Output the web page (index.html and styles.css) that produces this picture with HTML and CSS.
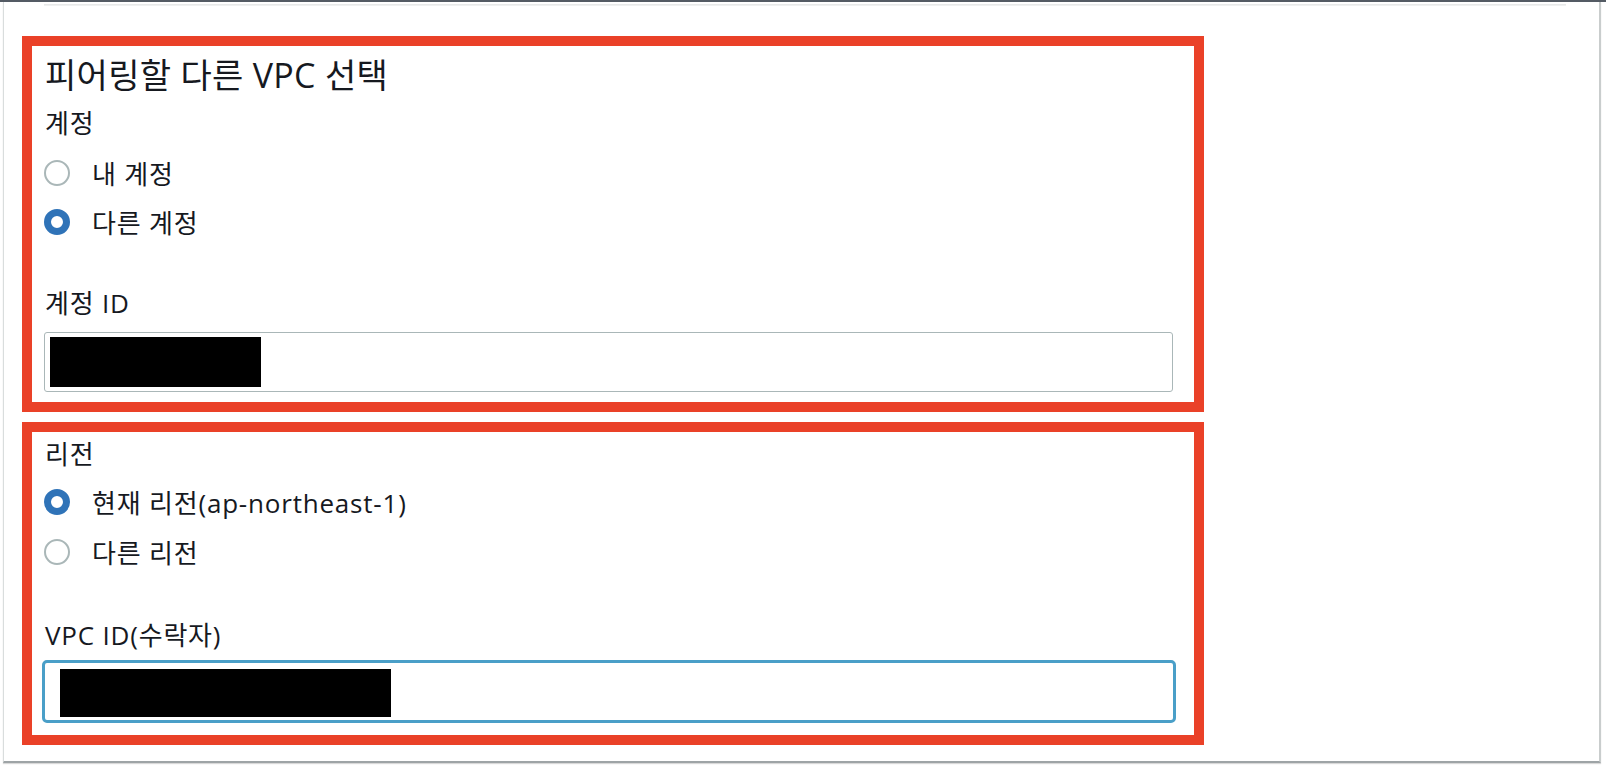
FILE: index.html
```html
<!DOCTYPE html>
<html lang="ko">
<head>
<meta charset="utf-8">
<title>VPC 피어링</title>
<link rel="stylesheet" href="styles.css">
</head>
<body>
<div class="topbar"></div>
<div class="card">
  <div class="divider"></div>
  <section class="box box-account">
    <h2 class="title">피어링할 다른 VPC 선택</h2>
    <div class="field-label">계정</div>
    <div class="radio-group">
      <label class="radio-row"><span class="radio"></span><span class="radio-text">내 계정</span></label>
      <label class="radio-row"><span class="radio checked"></span><span class="radio-text">다른 계정</span></label>
    </div>
    <div class="field-label field-gap">계정 ID</div>
    <div class="input input-account"><span class="redact redact-account"></span></div>
  </section>
  <section class="box box-region">
    <div class="field-label field-first">리전</div>
    <div class="radio-group">
      <label class="radio-row"><span class="radio checked"></span><span class="radio-text">현재 리전(ap-northeast-1)</span></label>
      <label class="radio-row"><span class="radio"></span><span class="radio-text">다른 리전</span></label>
    </div>
    <div class="field-label field-gap">VPC ID(수락자)</div>
    <div class="input input-focus"><span class="redact redact-vpc"></span></div>
  </section>
</div>
</body>
</html>
```
FILE: styles.css
```css
html, body {
  margin: 0;
  padding: 0;
  background: #ffffff;
}
body {
  font-family: "Open Sans", "Noto Sans CJK KR", sans-serif;
  color: #16191f;
  width: 1606px;
  height: 766px;
  overflow: hidden;
}
.topbar {
  height: 2px;
  background: #545b64;
}
.card {
  margin-left: 3px;
  width: 1598px;
  height: 761px;
  border-left: 1px solid #d9dddd;
  border-right: 2px solid #c9cdcd;
  border-bottom: 2px solid #9ea4a6;
  box-shadow: 0 1px 1px rgba(0,0,0,0.15);
  padding-top: 2px;
  padding-left: 18px;
  box-sizing: border-box;
}
.divider {
  margin-left: 22px;
  width: 1522px;
  height: 2px;
  background: linear-gradient(to bottom, #e3e5e5, #f4f5f5);
}
.box {
  width: 1182px;
  box-sizing: border-box;
  border: 10px solid #ea4128;
  padding: 0 21px 0 12px;
}
.box-account {
  margin-top: 30px;
  height: 376px;
}
.box-region {
  margin-top: 10px;
  height: 323px;
}
.title {
  margin: 0;
  height: 54px;
  display: flex;
  align-items: center;
  padding-left: 1px;
  font-size: 34px;
  font-weight: 400;
  letter-spacing: 0.3px;
}
.field-label {
  height: 44px;
  display: flex;
  align-items: center;
  padding-left: 1px;
  font-size: 26px;
  letter-spacing: 0.8px;
}
.field-first {
  height: 42px;
}
.field-gap {
  margin-top: 34px;
}
.box-region .field-gap {
  margin-top: 35px;
}
.radio-group {
  margin-top: 4px;
  display: flex;
  flex-direction: column;
}
.box-region .radio-group {
  margin-top: 3px;
}
.radio-row {
  height: 49px;
  display: flex;
  align-items: center;
  gap: 22px;
  font-size: 26px;
  letter-spacing: 0.8px;
}
.box-region .radio-row {
  height: 50px;
}
.radio {
  width: 26px;
  height: 26px;
  box-sizing: border-box;
  border-radius: 50%;
  border: 2px solid #aab7b8;
  background: #ffffff;
  flex: none;
}
.radio.checked {
  border: 7.5px solid #2f73b8;
  background: #ffffff;
}
.input {
  box-sizing: border-box;
  background: #ffffff;
}
.input-account {
  margin-top: 8px;
  width: 1129px;
  height: 60px;
  border: 1px solid #aab7b8;
  border-radius: 3px;
  padding: 4px 0 0 5px;
}
.input-focus {
  margin-top: 4px;
  margin-left: -2px;
  width: 1134px;
  height: 63px;
  border: 3px solid #4a9fc8;
  border-radius: 5px;
  padding: 6px 0 0 15px;
}
.redact {
  display: block;
  background: #000000;
}
.redact-account {
  width: 211px;
  height: 50px;
}
.redact-vpc {
  width: 331px;
  height: 48px;
}
```
